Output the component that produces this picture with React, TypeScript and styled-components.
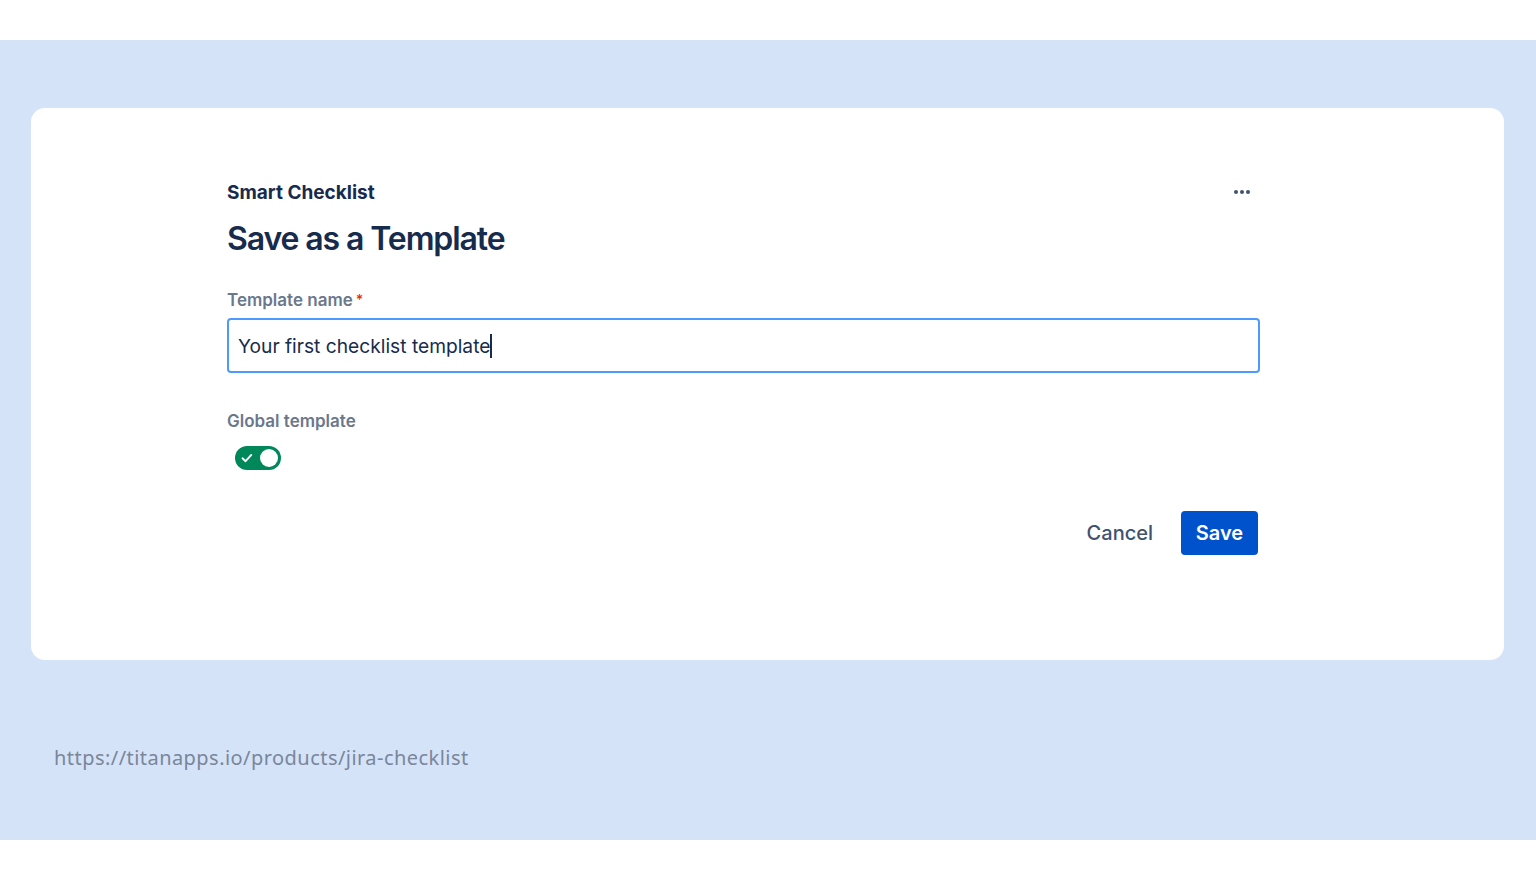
import { FC } from "react";
import styled, { createGlobalStyle } from "styled-components";

const GlobalStyle = createGlobalStyle`
  html, body {
    margin: 0;
    padding: 0;
    background: #ffffff;
  }

  * {
    box-sizing: border-box;
  }
`;

const App: FC = () => {
  return (
    <>
      <GlobalStyle />
      <Page>
        <Backdrop>
          <Card>
            <Dialog>
              <HeaderRow>
                <AppName>Smart Checklist</AppName>
                <MoreButton aria-label="More">
                  <Dot />
                  <Dot />
                  <Dot />
                </MoreButton>
              </HeaderRow>
              <Title>Save as a Template</Title>

              <Field>
                <FieldLabel>
                  Template name<Required>*</Required>
                </FieldLabel>
                <InputBox>
                  <InputText>Your first checklist template</InputText>
                  <Caret />
                </InputBox>
              </Field>

              <Field $gap={15}>
                <FieldLabel>Global template</FieldLabel>
                <Toggle>
                  <svg width="14" height="14" viewBox="0 0 14 14">
                    <path
                      d="M2.5 7.3 L5.6 10.2 L11.3 3.9"
                      fill="none"
                      stroke="#ffffff"
                      strokeWidth="1.9"
                      strokeLinecap="round"
                      strokeLinejoin="round"
                    />
                  </svg>
                  <Knob />
                </Toggle>
              </Field>

              <Actions>
                <TextButton>Cancel</TextButton>
                <PrimaryButton>Save</PrimaryButton>
              </Actions>
            </Dialog>
          </Card>

          <SourceLink>https://titanapps.io/products/jira-checklist</SourceLink>
        </Backdrop>
      </Page>
    </>
  );
};

const Page = styled.div`
  width: 1536px;
  height: 880px;
  padding: 40px 0;
  background: #ffffff;
`;

const Backdrop = styled.div`
  height: 800px;
  background: #d4e3f8;
  padding: 68px 32px 0 31px;
  display: flex;
  flex-direction: column;
`;

const Card = styled.div`
  height: 552px;
  background: #ffffff;
  border-radius: 14px;
  padding: 70px 0 0 196px;
`;

const Dialog = styled.div`
  width: 1033px;
  font-family: Inter, "Noto Sans", sans-serif;
  color: #172b4d;
`;

const HeaderRow = styled.div`
  display: flex;
  align-items: center;
  justify-content: space-between;
  height: 28px;
`;

const AppName = styled.div`
  font-size: 19px;
  font-weight: 700;
  letter-spacing: 0;
  color: #172b4d;
`;

const MoreButton = styled.div`
  display: flex;
  gap: 2px;
  padding-right: 10px;
`;

const Dot = styled.span`
  width: 4px;
  height: 4px;
  border-radius: 50%;
  background: #42526e;
`;

const Title = styled.h1`
  margin: 13px 0 0;
  font-size: 32px;
  font-weight: 600;
  letter-spacing: -1.1px;
  line-height: 40px;
  color: #172b4d;
`;

const Field = styled.div<{ $gap?: number }>`
  margin-top: ${(p) => (p.$gap ? 38 : 31)}px;
  display: flex;
  flex-direction: column;
  gap: ${(p) => p.$gap ?? 8}px;
`;

const FieldLabel = styled.label`
  font-size: 17px;
  font-weight: 600;
  color: #6b778c;
  line-height: 20px;
`;

const Required = styled.span`
  color: #de350b;
  margin-left: 3px;
  font-size: 14px;
  vertical-align: top;
`;

const InputBox = styled.div`
  height: 55px;
  border: 2px solid #4c9aff;
  border-radius: 4px;
  display: flex;
  align-items: center;
  padding: 0 9px;
`;

const InputText = styled.span`
  font-size: 19.2px;
  color: #172b4d;
  letter-spacing: 0;
`;

const Caret = styled.span`
  width: 1.5px;
  height: 24px;
  background: #172b4d;
`;

const Toggle = styled.div`
  margin-left: 8px;
  width: 46px;
  height: 24px;
  border-radius: 12px;
  background: #00875a;
  display: flex;
  align-items: center;
  justify-content: space-between;
  padding: 0 3px 0 5px;
`;

const Knob = styled.span`
  width: 18px;
  height: 18px;
  border-radius: 50%;
  background: #ffffff;
`;

const Actions = styled.div`
  margin-top: 41px;
  display: flex;
  justify-content: flex-end;
  align-items: center;
  gap: 12px;
  padding-right: 2px;
`;

const TextButton = styled.button`
  border: none;
  background: transparent;
  font-family: Inter, "Noto Sans", sans-serif;
  font-size: 20px;
  font-weight: 500;
  color: #42526e;
  height: 44px;
  padding: 0 16px;
  cursor: pointer;
`;

const PrimaryButton = styled(TextButton)`
  background: #0052cc;
  color: #ffffff;
  font-weight: 600;
  border-radius: 4px;
  width: 77px;
  padding: 0;
`;

const SourceLink = styled.div`
  margin: 84px 0 0 23px;
  font-family: "Noto Sans", sans-serif;
  font-size: 20px;
  color: #7a869a;
  letter-spacing: 0.45px;
`;

export default App;
